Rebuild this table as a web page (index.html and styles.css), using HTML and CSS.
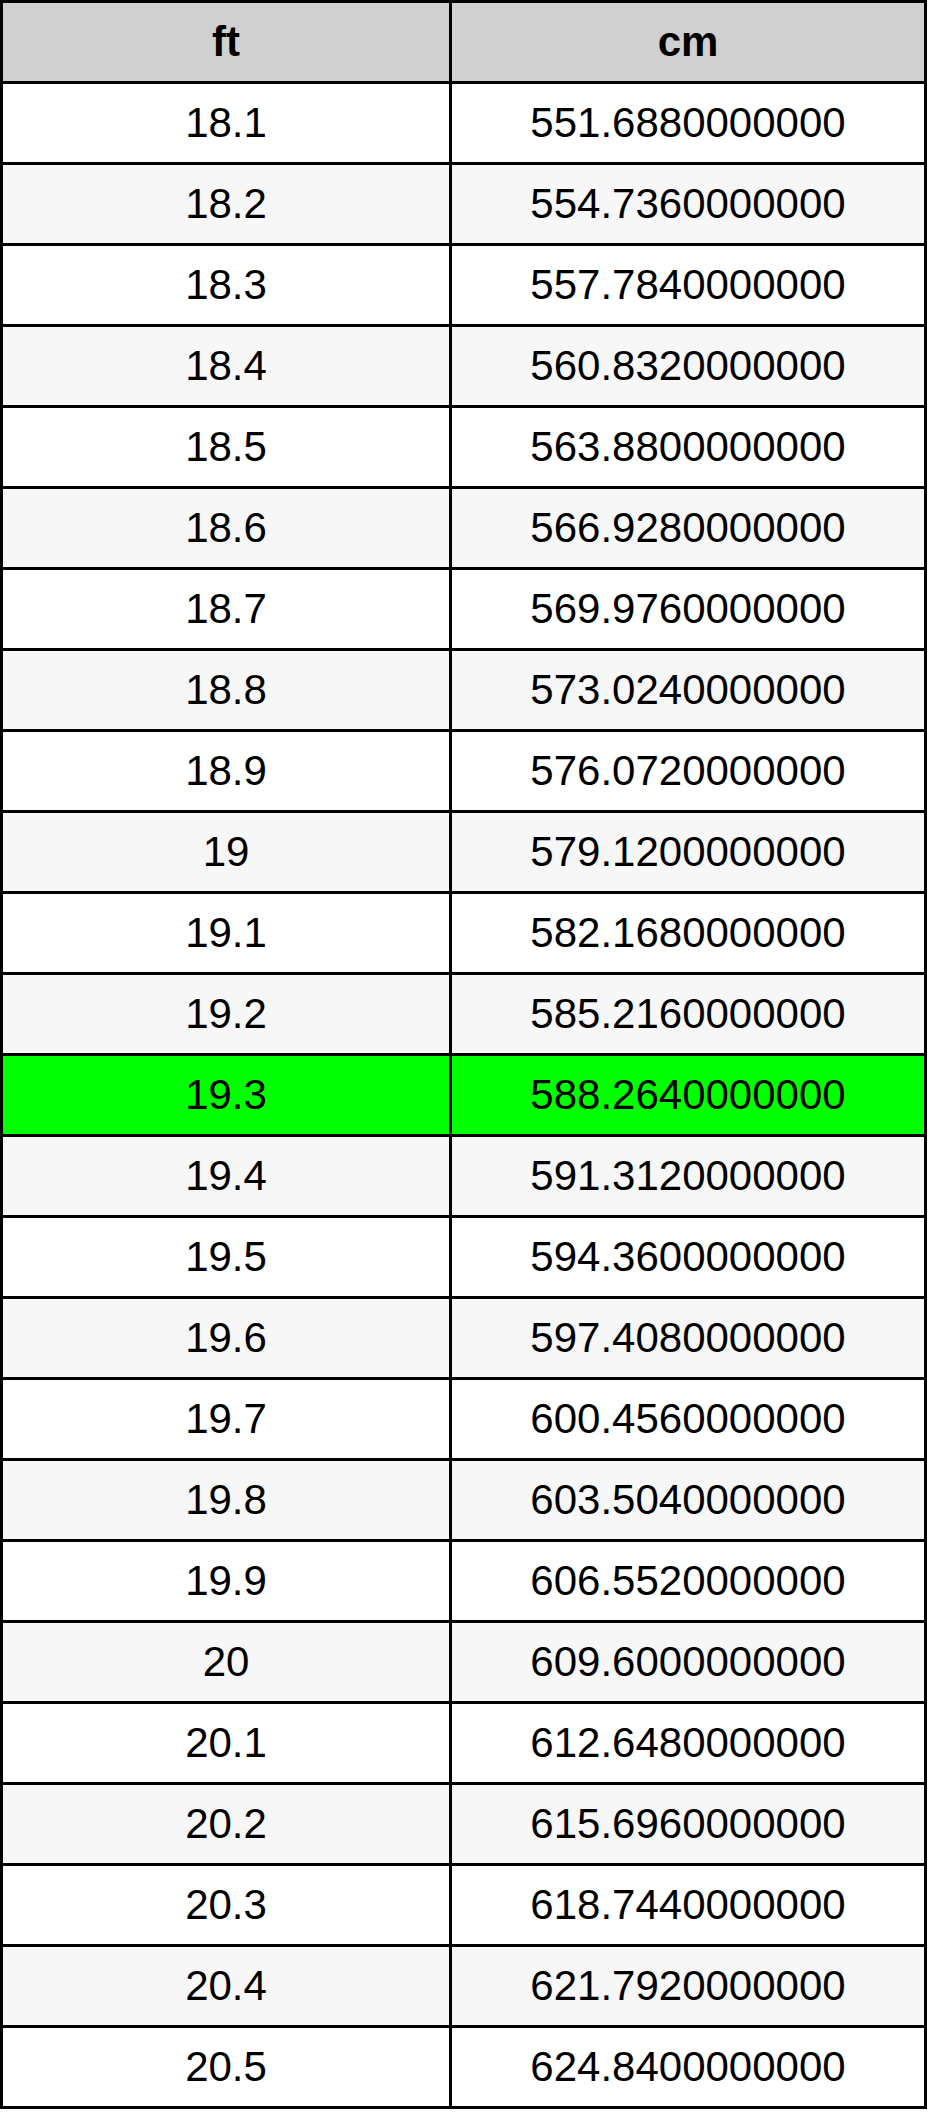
FILE: index.html
```html
<!DOCTYPE html>
<html>
<head>
<meta charset="utf-8">
<link rel="stylesheet" href="styles.css">
</head>
<body>
<table class="conv">
<thead>
<tr><th class="c1">ft</th><th class="c2">cm</th></tr>
</thead>
<tbody>
<tr><td>18.1</td><td>551.6880000000</td></tr>
<tr class="alt"><td>18.2</td><td>554.7360000000</td></tr>
<tr><td>18.3</td><td>557.7840000000</td></tr>
<tr class="alt"><td>18.4</td><td>560.8320000000</td></tr>
<tr><td>18.5</td><td>563.8800000000</td></tr>
<tr class="alt"><td>18.6</td><td>566.9280000000</td></tr>
<tr><td>18.7</td><td>569.9760000000</td></tr>
<tr class="alt"><td>18.8</td><td>573.0240000000</td></tr>
<tr><td>18.9</td><td>576.0720000000</td></tr>
<tr class="alt"><td>19</td><td>579.1200000000</td></tr>
<tr><td>19.1</td><td>582.1680000000</td></tr>
<tr class="alt"><td>19.2</td><td>585.2160000000</td></tr>
<tr class="hl"><td>19.3</td><td>588.2640000000</td></tr>
<tr class="alt"><td>19.4</td><td>591.3120000000</td></tr>
<tr><td>19.5</td><td>594.3600000000</td></tr>
<tr class="alt"><td>19.6</td><td>597.4080000000</td></tr>
<tr><td>19.7</td><td>600.4560000000</td></tr>
<tr class="alt"><td>19.8</td><td>603.5040000000</td></tr>
<tr><td>19.9</td><td>606.5520000000</td></tr>
<tr class="alt"><td>20</td><td>609.6000000000</td></tr>
<tr><td>20.1</td><td>612.6480000000</td></tr>
<tr class="alt"><td>20.2</td><td>615.6960000000</td></tr>
<tr><td>20.3</td><td>618.7440000000</td></tr>
<tr class="alt"><td>20.4</td><td>621.7920000000</td></tr>
<tr><td>20.5</td><td>624.8400000000</td></tr>
</tbody>
</table>
</body>
</html>
```
FILE: styles.css
```css
html, body {
  margin: 0;
  padding: 0;
  background: #ffffff;
}
.conv {
  border-collapse: separate;
  border-spacing: 0;
  table-layout: fixed;
  width: 927px;
  border-left: 3px solid #000;
  border-top: 3px solid #000;
  font-family: "Liberation Sans", Arial, sans-serif;
  font-size: 42px;
  color: #000;
}
.conv th, .conv td {
  box-sizing: border-box;
  height: 81px;
  padding: 0;
  border-right: 3px solid #000;
  border-bottom: 3px solid #000;
  text-align: center;
  vertical-align: middle;
  line-height: 78px;
}
.conv th {
  background: #d0d0d0;
  font-weight: bold;
}
.conv .c1 { width: 449px; }
.conv .c2 { width: 475px; }
.conv td { background: #ffffff; }
.conv tr.alt td { background: #f7f7f7; }
.conv tr.hl td { background: #00ff00; }
```
